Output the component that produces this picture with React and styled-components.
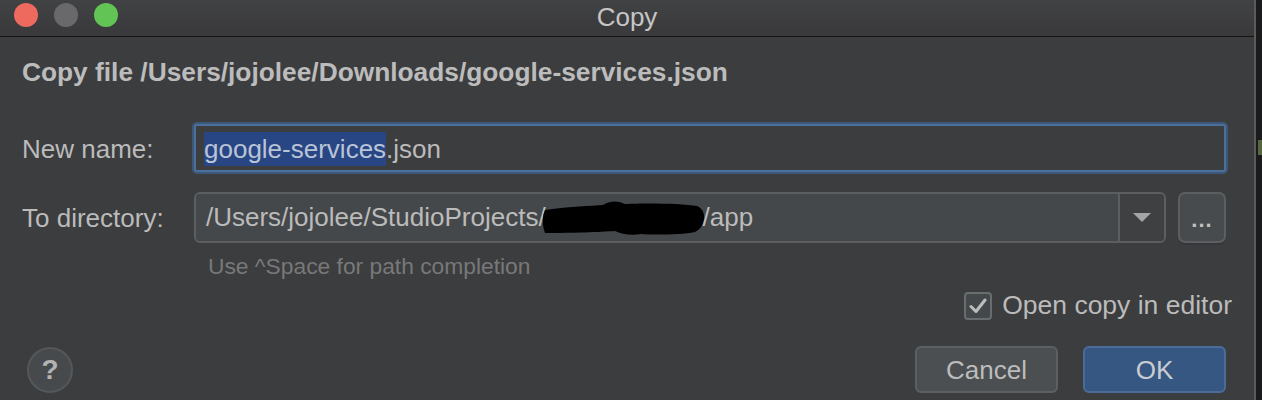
import React from "react";
import styled, { createGlobalStyle } from "styled-components";

const GlobalStyle = createGlobalStyle`
  html, body {
    margin: 0;
    padding: 0;
    background: #1c1c1c;
  }
  body {
    font-family: "Liberation Sans", Arial, sans-serif;
    -webkit-font-smoothing: antialiased;
  }
`;

const Screen = styled.div`
  display: flex;
  width: 1262px;
  height: 400px;
  overflow: hidden;
`;

const Dialog = styled.div`
  width: 1254px;
  height: 400px;
  background: #3c3d3f;
  border-right: 2px solid #5a5b5c;
  display: flex;
  flex-direction: column;
`;

const SideStrip = styled.div`
  flex: 1;
  background: #1b1b1b;
  padding-top: 140px;
`;

const SideMark = styled.div`
  width: 4px;
  height: 15px;
  margin-left: 2px;
  background: #56663f;
`;

const TitleBar = styled.div`
  height: 36px;
  border-bottom: 1px solid #141414;
  background: linear-gradient(#414244, #39393b);
  display: grid;
  grid-template-columns: 1fr auto 1fr;
  align-items: center;
`;

const Lights = styled.div`
  display: flex;
  gap: 16px;
  padding-left: 14px;
  margin-top: -6px;
`;

const Light = styled.span`
  width: 24px;
  height: 24px;
  border-radius: 50%;
  background: ${(p) => p.color};
`;

const WindowTitle = styled.div`
  color: #c6c6c6;
  font-size: 26px;
  line-height: 30px;
  margin-top: -2px;
`;

const Content = styled.div`
  padding: 20px 28px 0 22px;
  color: #bbbbbb;
  font-size: 26px;
`;

const Heading = styled.div`
  font-weight: bold;
  font-size: 26.3px;
  line-height: 30px;
  color: #bcbcbc;
`;

const Form = styled.div`
  display: grid;
  grid-template-columns: 172px 1fr;
  row-gap: 20px;
  margin-top: 37px;
  align-items: center;
`;

const Label = styled.div`
  line-height: 30px;
  margin-top: ${(p) => p.$nudge || 0}px;
`;

const TextField = styled.div`
  height: 42px;
  border: 2px solid #4b6f9b;
  box-shadow: 0 0 0 2px #3e5878;
  border-radius: 3px;
  background: #3c3d3f;
  display: flex;
  align-items: center;
  padding-left: 8px;
  padding-top: 2px;
  box-sizing: content-box;
  color: #bbbbbb;
`;

const Selected = styled.span`
  background: #284684;
  color: #b9c4d6;
  line-height: 34px;
`;

const DirRow = styled.div`
  display: flex;
  gap: 12px;
  height: 51px;
`;

const Combo = styled.div`
  flex: 1;
  display: flex;
  border: 2px solid #5c5f61;
  border-radius: 6px;
  overflow: hidden;
`;

const ComboValue = styled.div`
  flex: 1;
  background: #45484a;
  display: flex;
  align-items: center;
  padding-left: 10px;
  white-space: nowrap;
`;

const Redaction = styled.svg`
  width: 165px;
  height: 36px;
  margin: 0 -3px 0 -5px;
`;

const ArrowButton = styled.div`
  width: 44px;
  border-left: 2px solid #5c5f61;
  background: #3e4042;
  display: flex;
  align-items: center;
  justify-content: center;
`;

const Arrow = styled.span`
  width: 0;
  height: 0;
  border-left: 9px solid transparent;
  border-right: 9px solid transparent;
  border-top: 9px solid #a5a5a5;
`;

const BrowseButton = styled.div`
  width: 48px;
  border: 2px solid #5c5f61;
  border-radius: 7px;
  background: #484b4d;
  box-shadow: 0 2px 0 #36373a;
  display: flex;
  align-items: center;
  justify-content: center;
  font-size: 22px;
  font-weight: bold;
  color: #c0c0c0;
  letter-spacing: 1px;
  padding-top: 4px;
  box-sizing: border-box;
`;

const Hint = styled.div`
  grid-column: 2;
  font-size: 22.8px;
  line-height: 26px;
  color: #787878;
  padding-left: 14px;
  margin-top: -10px;
`;

const CheckRow = styled.label`
  display: flex;
  justify-content: flex-end;
  align-items: center;
  gap: 10px;
  margin-top: 13px;
  margin-right: -6px;
  height: 27px;
  font-size: 26.5px;
`;

const CheckBox = styled.span`
  width: 24px;
  height: 24px;
  border: 2px solid #6a6d6f;
  border-radius: 4px;
  background: #43494a;
  display: flex;
  align-items: center;
  justify-content: center;
`;

const Footer = styled.div`
  display: flex;
  align-items: center;
  justify-content: space-between;
  margin-top: 27px;
`;

const HelpButton = styled.div`
  width: 42px;
  height: 42px;
  margin-left: 5px;
  border-radius: 50%;
  border: 2px solid #55585a;
  background: #474a4c;
  color: #b3b3b3;
  font-weight: bold;
  font-size: 28px;
  display: flex;
  align-items: center;
  justify-content: center;
`;

const Buttons = styled.div`
  display: flex;
  gap: 25px;
`;

const Button = styled.div`
  width: 139px;
  height: 41px;
  border-radius: 6px;
  border: 2px solid ${(p) => (p.$primary ? "#4a6c9b" : "#5d6062")};
  background: ${(p) => (p.$primary ? "#365781" : "#4b4f51")};
  color: ${(p) => (p.$primary ? "#c9cdd3" : "#bcbcbc")};
  display: flex;
  align-items: center;
  justify-content: center;
  font-size: 26px;
  padding-top: 2px;
  box-sizing: content-box;
`;

export default function App() {
  return (
    <>
      <GlobalStyle />
      <Screen>
        <Dialog>
          <TitleBar>
            <Lights>
              <Light color="#ee6a5f" />
              <Light color="#69696b" />
              <Light color="#62c454" />
            </Lights>
            <WindowTitle>Copy</WindowTitle>
            <div />
          </TitleBar>
          <Content>
            <Heading>Copy file /Users/jojolee/Downloads/google-services.json</Heading>
            <Form>
              <Label $nudge={2}>New name:</Label>
              <TextField>
                <Selected>google-services</Selected>.json
              </TextField>
              <Label>To directory:</Label>
              <DirRow>
                <Combo>
                  <ComboValue>
                    /Users/jojolee/StudioProjects/
                    <Redaction viewBox="0 0 165 36">
                      <path
                        d="M4 10 C30 6 50 6 62 5 C68 1 76 0 84 4 C100 3 140 3 156 6 C166 10 166 26 154 32 C140 35 110 35 100 34 C90 36 80 34 74 31 C60 32 30 33 4 33 C1 25 1 16 4 10 Z"
                        fill="#000"
                      />
                    </Redaction>
                    /app
                  </ComboValue>
                  <ArrowButton>
                    <Arrow />
                  </ArrowButton>
                </Combo>
                <BrowseButton>...</BrowseButton>
              </DirRow>
              <Hint>Use ^Space for path completion</Hint>
            </Form>
            <CheckRow>
              <CheckBox>
                <svg width="18" height="16" viewBox="0 0 18 16">
                  <path d="M2 8.5 L7 13.5 L16 2" fill="none" stroke="#bdbdbd" strokeWidth="3" strokeLinecap="round" strokeLinejoin="round" />
                </svg>
              </CheckBox>
              Open copy in editor
            </CheckRow>
            <Footer>
              <HelpButton>?</HelpButton>
              <Buttons>
                <Button>Cancel</Button>
                <Button $primary>OK</Button>
              </Buttons>
            </Footer>
          </Content>
        </Dialog>
        <SideStrip>
          <SideMark />
        </SideStrip>
      </Screen>
    </>
  );
}
